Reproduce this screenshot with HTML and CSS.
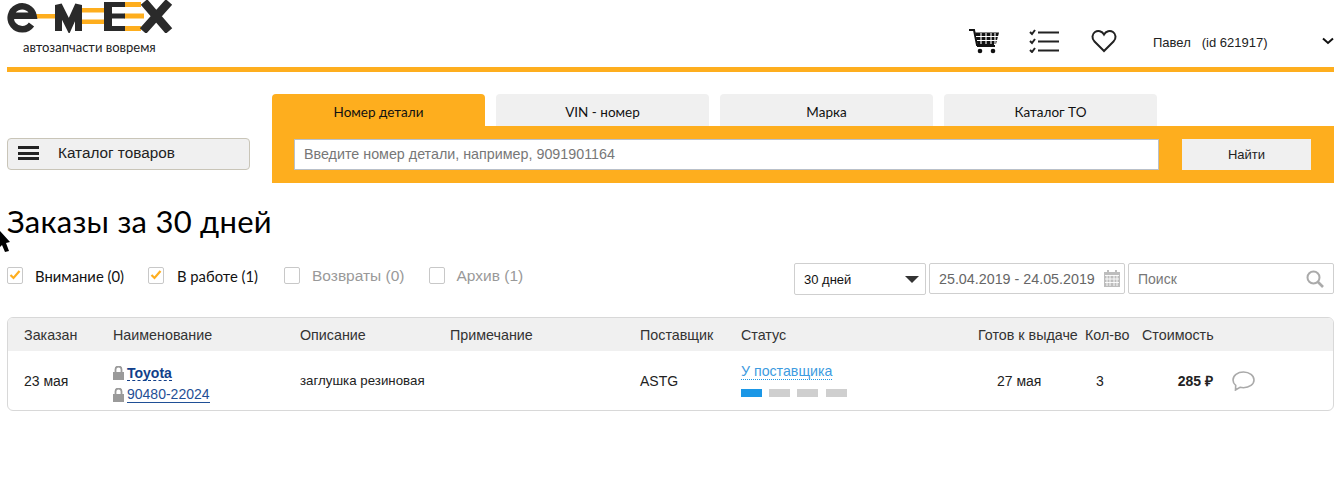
FILE: index.html
```html
<!DOCTYPE html>
<html lang="ru">
<head>
<meta charset="utf-8">
<title>Заказы за 30 дней</title>
<link rel="stylesheet" href="styles.css">
</head>
<body>
<svg class="cursor" width="12" height="24" viewBox="0 0 12 24"><path d="M0 0 L10 11 L6 12 L9 20 L5 21 L2 14 L0 16 Z" fill="#000"/></svg>
<header class="top">
  <div class="logo">
    <svg class="logo-mark" role="img" aria-label="e-MEX" width="166" height="33" viewBox="0 0 166 33">
      <g fill="#feae1e">
        <rect x="28" y="14" width="21" height="4.500"/>
        <rect x="74" y="8" width="24" height="4.500"/>
        <rect x="74" y="19.500" width="24" height="4.500"/>
        <rect x="117" y="2" width="17" height="5"/>
        <rect x="117" y="13.500" width="20" height="5"/>
        <rect x="117" y="26" width="17" height="5"/>
      </g>
      <g fill="none" stroke="#2a2a2a">
        <path d="M4 15.700H26.500A11.500 11.500 0 1 0 24.500 24.500" stroke-width="6.500"/>
        <path d="M51.500 31V5L62 26 71.500 5V31" stroke-width="7"/>
        <path d="M137 2 L162 31M162 2 L136 31" stroke-width="8.500"/>
      </g>
      <g fill="#2a2a2a">
        <rect x="97" y="2" width="8" height="29"/>
        <rect x="97" y="2" width="21" height="5"/>
        <rect x="97" y="13.500" width="21" height="5"/>
        <rect x="97" y="26" width="21" height="5"/>
      </g>
    </svg>
    <div class="slogan">автозапчасти вовремя</div>
  </div>
  <div class="userbar">
    <svg class="ic-cart" width="32" height="26" viewBox="0 0 32 26">
      <path d="M1 2h5l3 15h17" fill="none" stroke="#111" stroke-width="2"/>
      <path d="M7 4.500h24l-3 11.500H9.500z" fill="#111"/>
      <path d="M8 8.500h22M9 12.500h20M13 5v11M18 5v11M23 5v11M27 5v11" stroke="#fff" stroke-width="1.100"/>
      <rect x="9" y="17" width="18" height="2" fill="#111"/>
      <circle cx="12" cy="23" r="2.300" fill="#111"/><circle cx="25" cy="23" r="2.300" fill="#111"/>
    </svg>
    <svg class="ic-list" width="30" height="24" viewBox="0 0 30 24">
      <path d="M1 3l2 2 3-4M1 12l2 2 3-4M1 21l2 2 3-4" fill="none" stroke="#222" stroke-width="2"/>
      <path d="M9 3.500h21M9 12.500h21M9 21.500h21" stroke="#222" stroke-width="2.200"/>
    </svg>
    <svg class="ic-heart" width="26" height="24" viewBox="0 0 26 24">
      <path d="M13 22 L3.500 12.500C.5 9.500 1 5 4 3c3-2 7-1 9 2.500C15 2 19 1 22 3c3 2 3.500 6.500.5 9.500Z" fill="none" stroke="#222" stroke-width="2"/>
    </svg>
    <div class="user"><span>Павел</span><span>(id 621917)</span></div>
    <svg class="ic-chev" width="12" height="8" viewBox="0 0 12 8"><path d="M1 1.500l5 4.500 5-4.500" fill="none" stroke="#111" stroke-width="2"/></svg>
  </div>
</header>
<section class="searchrow">
  <button class="catalog" type="button">
    <span class="burger"><i></i><i></i><i></i></span>
    <span>Каталог товаров</span>
  </button>
  <div class="search">
    <nav class="tabs">
      <a class="tab active">Номер детали</a>
      <a class="tab">VIN - номер</a>
      <a class="tab">Марка</a>
      <a class="tab">Каталог ТО</a>
    </nav>
    <div class="panel">
      <input class="q" type="text" placeholder="Введите номер детали, например, 9091901164">
      <button class="go" type="button">Найти</button>
    </div>
  </div>
</section>
<h1 class="title">Заказы за 30 дней</h1>
<section class="filters">
  <div class="checks">
    <label class="chk on"><span class="box"><svg width="14" height="12" viewBox="0 0 14 12"><path d="M2.500 6l3 3 6-7" fill="none" stroke="#feae1e" stroke-width="2.200"/></svg></span>Внимание (0)</label>
    <label class="chk on"><span class="box"><svg width="14" height="12" viewBox="0 0 14 12"><path d="M2.500 6l3 3 6-7" fill="none" stroke="#feae1e" stroke-width="2.200"/></svg></span>В работе (1)</label>
    <label class="chk"><span class="box"></span>Возвраты (0)</label>
    <label class="chk"><span class="box"></span>Архив (1)</label>
  </div>
  <div class="controls">
    <div class="ctl sel"><span>30 дней</span><i class="tri"></i></div>
    <div class="ctl date"><span>25.04.2019 - 24.05.2019</span>
      <svg width="16" height="17" viewBox="0 0 16 17"><path d="M0 2h16v15H0z" fill="#bdbdbd"/><path d="M3 0h2v4H3zM11 0h2v4h-2z" fill="#bdbdbd"/><path d="M1 5.500h14M3 5v11M6 5v11M10 5v11M13 5v11M1 9h14M1 12.500h14" stroke="#fff" stroke-width=".9"/></svg>
    </div>
    <div class="ctl find"><span>Поиск</span>
      <svg width="18" height="18" viewBox="0 0 18 18"><circle cx="7.500" cy="7.500" r="6" fill="none" stroke="#aaa" stroke-width="2"/><path d="M12 12l5 5" stroke="#aaa" stroke-width="2.600"/></svg>
    </div>
  </div>
</section>
<section class="orders">
  <div class="row head">
    <div>Заказан</div><div>Наименование</div><div>Описание</div><div>Примечание</div><div>Поставщик</div><div>Статус</div><div>Готов к выдаче</div><div>Кол-во</div><div>Стоимость</div><div></div>
  </div>
  <div class="row body">
    <div>23 мая</div>
    <div class="name">
      <div class="nl"><svg class="lock" width="11" height="14" viewBox="0 0 11 14"><path d="M0 6h11v8H0z" fill="#9a9a9a"/><path d="M2.500 6V3.500a3 3 0 0 1 6 0V6" fill="none" stroke="#9a9a9a" stroke-width="1.800"/></svg><a class="brand">Toyota</a></div>
      <div class="nl"><svg class="lock" width="11" height="14" viewBox="0 0 11 14"><path d="M0 6h11v8H0z" fill="#9a9a9a"/><path d="M2.500 6V3.500a3 3 0 0 1 6 0V6" fill="none" stroke="#9a9a9a" stroke-width="1.800"/></svg><a class="part">90480-22024</a></div>
    </div>
    <div class="desc">заглушка резиновая</div>
    <div></div>
    <div>ASTG</div>
    <div class="status">
      <a>У поставщика</a>
      <div class="steps"><i class="cur"></i><i></i><i></i><i></i></div>
    </div>
    <div class="ready">27 мая</div>
    <div class="qty">3</div>
    <div class="price">285 ₽</div>
    <div class="msg"><svg width="23" height="20" viewBox="0 0 23 20"><path d="M11.500 1C5.500 1 1 4.500 1 9c0 2.200 1 4 2.700 5.300L3.500 19l4.500-2.700c1.100.3 2.300.4 3.500.4 6 0 10.500-3.500 10.500-7.800S17.500 1 11.500 1Z" fill="none" stroke="#aaa" stroke-width="1.600"/></svg></div>
  </div>
</section>
</body>
</html>
```
FILE: styles.css
```css
* { box-sizing: border-box; }
html, body { margin: 0; padding: 0; }
body {
  position: relative;
  height: 486px;
  overflow: hidden;
  padding: 0 9px 0 7px;
  background: #fff;
  color: #222;
  font: 14px "Liberation Sans", Arial, sans-serif;
}
.cursor { position: absolute; left: 0; top: 231px; }

.top {
  display: flex;
  justify-content: space-between;
  height: 72px;
  border-bottom: 5px solid #feae1e;
}
.logo-mark { display: block; }
.slogan {
  margin: 6px 0 0 16px;
  font: 13px/16px "Lato", sans-serif;
  color: #222;
}
.userbar {
  display: flex;
  align-items: center;
  height: 53px;
  margin-top: 14px;
}
.ic-cart { margin-right: 29px; }
.ic-list { margin-right: 32px; }
.ic-heart { margin-right: 36px; }
.user { width: 169px; margin-top: 4px; display: flex; gap: 11px; font-size: 13px; color: #222; }

.searchrow {
  display: flex;
  justify-content: space-between;
  align-items: flex-start;
  margin-top: 22px;
}
.catalog {
  display: flex;
  align-items: center;
  gap: 19px;
  width: 243px;
  height: 32px;
  margin-top: 44px;
  padding: 0 0 2px 10px;
  background: #f0f0f0;
  border: 1px solid #c9c5b8;
  border-radius: 4px;
  font: 15.300px "Liberation Sans", sans-serif;
  color: #222;
}
.burger { display: flex; flex-direction: column; gap: 2.500px; width: 21px; }
.burger i { display: block; height: 3px; background: #222; }
.search { width: 1062px; }
.tabs { display: flex; gap: 11px; height: 32px; }
.tab {
  width: 213px;
  background: #f0f0f0;
  border-radius: 4px 4px 0 0;
  text-align: center;
  font: 13.500px/37px "Lato", sans-serif;
  color: #111;
}
.tab.active { background: #feae1e; }
.panel {
  display: flex;
  align-items: center;
  justify-content: space-between;
  height: 57px;
  padding: 0 23px 0 22px;
  background: #feae1e;
}
.q {
  width: 865px;
  height: 31px;
  padding: 0 9px 2px;
  border: 1px solid #b9c0c9;
  background: #fff;
  font: 14.300px "Liberation Sans", sans-serif;
  outline: 0;
}
.q::placeholder { color: #777; opacity: 1; }
.go {
  width: 129px;
  height: 31px;
  border: 0;
  background: #f0f0f0;
  font: 13px "Liberation Sans", sans-serif;
  color: #222;
}

.title {
  margin: 18px 0 0;
  font: 400 31px/40px "Lato", sans-serif;
  letter-spacing: .25px;
  color: #000;
}
.filters {
  display: flex;
  justify-content: space-between;
  align-items: center;
  margin-top: 22px;
  height: 32px;
}
.checks { display: flex; gap: 24px; padding-bottom: 6px; }
.chk { display: flex; align-items: center; gap: 12px; font: 15.500px "Liberation Sans", sans-serif; color: #999; }
.chk.on { color: #111; font: 14.800px "Lato", sans-serif; }
.chk.on + .chk.on { gap: 13px; margin-right: 2px; }
.box {
  display: flex;
  align-items: center;
  justify-content: center;
  width: 16px;
  height: 17px;
  margin-top: -2px;
  border: 1px solid #c8c8c8;
  border-radius: 2px;
  background: #fff;
}
.controls { display: flex; gap: 3px; }
.ctl {
  display: flex;
  align-items: center;
  justify-content: space-between;
  height: 31px;
  border: 1px solid #cfcfcf;
  border-radius: 2px;
  padding: 0 9px;
  font-size: 13px;
  color: #666;
}
.sel { width: 132px; height: 32px; padding-right: 6px; color: #111; }
.date { width: 196px; padding-right: 4px; font-size: 14.300px; }
.find { width: 206px; padding-right: 9px; font-size: 14px; color: #777; }
.tri { width: 0; height: 0; border: 7px solid transparent; border-top-color: #333; border-bottom: 0; }

.orders {
  margin-top: 22px;
  border: 1px solid #d8d8d8;
  border-radius: 6px;
  overflow: hidden;
}
.row {
  display: grid;
  grid-template-columns: 105px 187px 150px 190px 101px 237px 107px 57px 90px 1fr;
  align-items: center;
}
.head { height: 33px; background: #f0f0f0; font-size: 14.300px; color: #333; }
.head > :first-child { padding-left: 16px; }
.body { height: 59px; font-size: 14px; color: #222; }
.body > :first-child { padding-left: 16px; }
.desc { font-size: 13.300px; }
.name { display: flex; flex-direction: column; gap: 2px; padding-top: 7px; }
.nl { display: flex; align-items: center; gap: 3px; height: 20px; }
.brand { font-weight: 700; color: #123f8a; border-bottom: 1px dashed #123f8a; line-height: 14px; font-size: 14px; }
.part { color: #1f4f96; border-bottom: 1px solid #1f4f96; line-height: 15px; font-size: 14px; }
.status { padding-bottom: 1px; }
.status a { color: #3d9be0; border-bottom: 1px dotted #1b97e6; font-size: 14.200px; line-height: 16px; display: inline-block; }
.steps { display: flex; gap: 7px; margin-top: 9px; }
.steps i { width: 21px; height: 8px; background: #cfcfcf; }
.steps i.cur { background: #1b97e6; }
.steps i:last-child { margin-left: 1px; }
.ready { padding-left: 19px; }
.qty { padding-left: 11px; }
.price { width: 71px; text-align: right; font-weight: 700; font-size: 14px; }
.msg { display: flex; }
```
